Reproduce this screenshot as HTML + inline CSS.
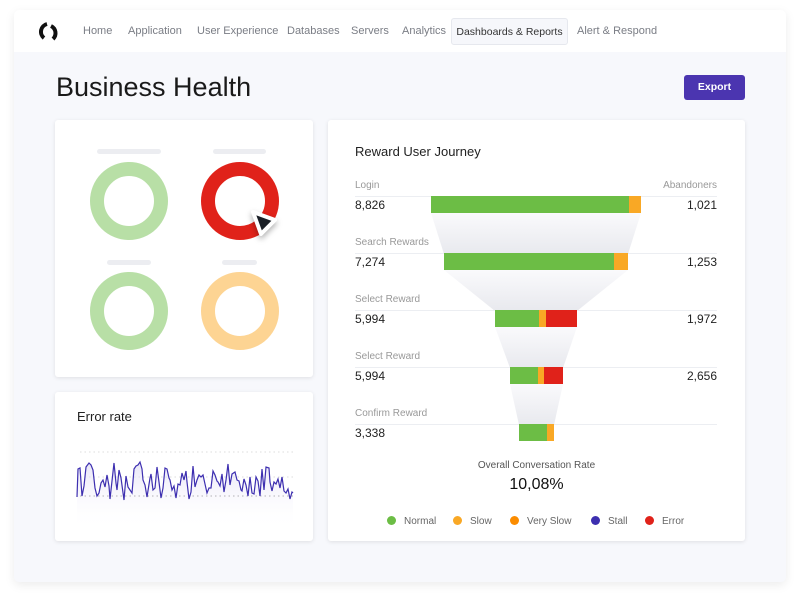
<!DOCTYPE html>
<html><head><meta charset="utf-8"><style>
*{margin:0;padding:0;box-sizing:border-box}
body{width:800px;height:600px;background:#fff;font-family:"Liberation Sans",sans-serif;position:relative;overflow:hidden;color:#222}
.frame{position:absolute;left:14px;top:10px;width:772px;height:572px;background:#f7f8fc;border-radius:5px;box-shadow:0 3px 10px rgba(0,0,0,.08)}
.nav{position:absolute;left:14px;top:10px;width:772px;height:42px;background:#fff;border-radius:5px 5px 0 0}
.nav span{position:absolute;top:15px;font-size:11px;color:#7a7d85}
.nav .act{top:8px;height:27px;width:117px;padding:7px 0;text-align:center;font-size:10.5px;background:#f6f7fb;border:1px solid #e6e8ee;border-radius:3px;color:#333}
h1{position:absolute;left:56px;top:72px;font-size:27px;font-weight:normal;color:#1a1a1a}
.btn{position:absolute;left:684px;top:75px;width:61px;height:25px;background:#4b35b0;border-radius:3px;color:#fff;font-size:10.5px;font-weight:bold;text-align:center;line-height:25px}
.card{position:absolute;background:#fff;border-radius:3px;box-shadow:0 1px 4px rgba(0,0,0,.1)}
.t{position:absolute;font-size:10px;color:#999}
.n{position:absolute;font-size:12px;color:#222}
.r{right:83px}
.ln{position:absolute;left:355px;width:362px;height:1px;background:#eceef2}
.leg{position:absolute;top:516px;font-size:10px;color:#666}
.leg i{display:inline-block;width:9px;height:9px;border-radius:50%;margin-right:8px;vertical-align:-1px}
</style></head><body>
<div class="frame"></div>
<div class="nav">
<svg style="position:absolute;left:25px;top:12px" width="20" height="20" viewBox="0 0 20 20"><path d="M8 2 A8 8 0 0 0 5 16" stroke="#111" stroke-width="4" fill="none"/><path d="M12 4 A8 8 0 0 1 14 17" stroke="#111" stroke-width="4" fill="none"/></svg>
<span style="left:69px">Home</span><span style="left:114px">Application</span><span style="left:183px">User Experience</span><span style="left:273px">Databases</span><span style="left:337px">Servers</span><span style="left:388px">Analytics</span><span class="act" style="left:437px">Dashboards &amp; Reports</span><span style="left:563px">Alert &amp; Respond</span>
</div>
<h1>Business Health</h1>
<div class="btn">Export</div>

<div class="card" style="left:55px;top:120px;width:258px;height:257px"></div>
<svg style="position:absolute;left:0;top:0" width="800" height="600">
<rect x="97" y="149" width="64" height="5" rx="2.5" fill="#ecedf1"/>
<rect x="213" y="149" width="53" height="5" rx="2.5" fill="#ecedf1"/>
<rect x="107" y="260" width="44" height="5" rx="2.5" fill="#ecedf1"/>
<rect x="222" y="260" width="35" height="5" rx="2.5" fill="#ecedf1"/>
<circle cx="129" cy="201" r="32" fill="none" stroke="#b8dfa6" stroke-width="14"/>
<circle cx="240" cy="201" r="32" fill="none" stroke="#e0221a" stroke-width="14"/>
<circle cx="129" cy="311" r="32" fill="none" stroke="#b8dfa6" stroke-width="14"/>
<circle cx="240" cy="311" r="32" fill="none" stroke="#fdd493" stroke-width="14"/>
<path d="M253 212 L275 220 L261 234 Z" fill="#1a1f26" stroke="#fff" stroke-width="4" stroke-linejoin="round" style="filter:drop-shadow(0 3px 3px rgba(0,0,0,.3))"/>
</svg>

<div class="card" style="left:55px;top:392px;width:258px;height:149px"></div>
<div style="position:absolute;left:77px;top:409px;font-size:13px;color:#222">Error rate</div>
<svg style="position:absolute;left:0;top:0" width="800" height="600">
<defs><linearGradient id="g" x1="0" y1="0" x2="0" y2="1"><stop offset="0" stop-color="#d8d4f2"/><stop offset="1" stop-color="#fff" stop-opacity="0"/></linearGradient></defs>
<line x1="80" y1="452" x2="293" y2="452" stroke="#ddd" stroke-dasharray="1.5 3"/>
<line x1="80" y1="477" x2="293" y2="477" stroke="#ddd" stroke-dasharray="1.5 3"/>
<line x1="80" y1="496" x2="293" y2="496" stroke="#999" stroke-dasharray="1.5 3"/>
<path d="M77 497 L78 469 L80 468 L82 496 L84 486 L86 467 L89 463 L91 465 L93 470 L95 488 L97 496 L99 493 L101 483 L103 480 L105 487 L107 475 L109 486 L110 499 L112 481 L114 463 L116 483 L117 490 L119 470 L121 478 L124 500 L126 476 L128 487 L130 490 L132 493 L134 469 L136 466 L138 465 L140 462 L142 469 L143 480 L145 485 L147 497 L150 478 L151 474 L153 490 L155 488 L157 467 L159 482 L161 498 L163 488 L165 468 L167 469 L169 478 L170 480 L172 490 L174 486 L176 498 L178 484 L180 485 L182 473 L184 480 L186 471 L187 482 L189 499 L191 492 L193 466 L195 487 L197 480 L199 475 L201 477 L203 475 L205 484 L207 493 L209 488 L211 488 L213 471 L215 475 L217 481 L218 482 L220 486 L222 474 L224 492 L226 480 L228 464 L230 485 L232 474 L235 472 L237 480 L239 481 L241 490 L242 491 L244 479 L246 485 L248 496 L250 477 L252 493 L254 494 L256 477 L258 481 L260 496 L262 469 L264 490 L266 467 L269 468 L270 482 L272 491 L274 482 L276 484 L278 479 L280 488 L282 477 L284 491 L286 493 L288 489 L290 499 L292 492 L293 493 L293 530 L77 530 Z" fill="url(#g)" opacity=".6"/>
<polyline fill="none" stroke="#3d2fb0" stroke-width="1.2" points="77,497 78,469 80,468 82,496 84,486 86,467 89,463 91,465 93,470 95,488 97,496 99,493 101,483 103,480 105,487 107,475 109,486 110,499 112,481 114,463 116,483 117,490 119,470 121,478 124,500 126,476 128,487 130,490 132,493 134,469 136,466 138,465 140,462 142,469 143,480 145,485 147,497 150,478 151,474 153,490 155,488 157,467 159,482 161,498 163,488 165,468 167,469 169,478 170,480 172,490 174,486 176,498 178,484 180,485 182,473 184,480 186,471 187,482 189,499 191,492 193,466 195,487 197,480 199,475 201,477 203,475 205,484 207,493 209,488 211,488 213,471 215,475 217,481 218,482 220,486 222,474 224,492 226,480 228,464 230,485 232,474 235,472 237,480 239,481 241,490 242,491 244,479 246,485 248,496 250,477 252,493 254,494 256,477 258,481 260,496 262,469 264,490 266,467 269,468 270,482 272,491 274,482 276,484 278,479 280,488 282,477 284,491 286,493 288,489 290,499 292,492 293,493"/>
</svg>

<div class="card" style="left:328px;top:120px;width:417px;height:421px"></div>
<div style="position:absolute;left:355px;top:144px;font-size:13px;color:#222">Reward User Journey</div>
<svg style="position:absolute;left:0;top:0" width="800" height="600">
<defs><linearGradient id="f" x1="0" y1="0" x2="0" y2="1"><stop offset="0" stop-color="#fafafc"/><stop offset="1" stop-color="#e8e9ee"/></linearGradient></defs>
<path d="M431 213 L641 213 L628 254 L444 254 Z" fill="url(#f)"/>
<path d="M444 270 L628 270 L577 311 L495 311 Z" fill="url(#f)"/>
<path d="M495 327 L577 327 L563 368 L510 368 Z" fill="url(#f)"/>
<path d="M510 384 L563 384 L554 425 L519 425 Z" fill="url(#f)"/>
</svg>
<div class="ln" style="top:196px"></div><div class="ln" style="top:253px"></div><div class="ln" style="top:310px"></div><div class="ln" style="top:367px"></div><div class="ln" style="top:424px"></div>
<svg style="position:absolute;left:0;top:0" width="800" height="600">
<rect x="431" y="196" width="198" height="17" fill="#6cbd45"/><rect x="629" y="196" width="12" height="17" fill="#f9a825"/>
<rect x="444" y="253" width="170" height="17" fill="#6cbd45"/><rect x="614" y="253" width="14" height="17" fill="#f9a825"/>
<rect x="495" y="310" width="44" height="17" fill="#6cbd45"/><rect x="539" y="310" width="7" height="17" fill="#f9a825"/><rect x="546" y="310" width="31" height="17" fill="#e0221a"/>
<rect x="510" y="367" width="28" height="17" fill="#6cbd45"/><rect x="538" y="367" width="6" height="17" fill="#f9a825"/><rect x="544" y="367" width="19" height="17" fill="#e0221a"/>
<rect x="519" y="424" width="28" height="17" fill="#6cbd45"/><rect x="547" y="424" width="7" height="17" fill="#f9a825"/>
</svg>
<div class="t" style="left:355px;top:180px">Login</div><div class="t r" style="top:180px">Abandoners</div>
<div class="n" style="left:355px;top:198px">8,826</div><div class="n r" style="top:198px">1,021</div>
<div class="t" style="left:355px;top:237px">Search Rewards</div>
<div class="n" style="left:355px;top:255px">7,274</div><div class="n r" style="top:255px">1,253</div>
<div class="t" style="left:355px;top:294px">Select Reward</div>
<div class="n" style="left:355px;top:312px">5,994</div><div class="n r" style="top:312px">1,972</div>
<div class="t" style="left:355px;top:351px">Select Reward</div>
<div class="n" style="left:355px;top:369px">5,994</div><div class="n r" style="top:369px">2,656</div>
<div class="t" style="left:355px;top:408px">Confirm Reward</div>
<div class="n" style="left:355px;top:426px">3,338</div>
<div style="position:absolute;left:328px;width:417px;top:460px;text-align:center;font-size:10px;color:#555">Overall Conversation Rate</div>
<div style="position:absolute;left:328px;width:417px;top:476px;text-align:center;font-size:16px;color:#111">10,08%</div>
<div class="leg" style="left:387px"><i style="background:#6cbd45"></i>Normal</div>
<div class="leg" style="left:453px"><i style="background:#f9a825"></i>Slow</div>
<div class="leg" style="left:510px"><i style="background:#fb8c00"></i>Very Slow</div>
<div class="leg" style="left:591px"><i style="background:#3d2fb0"></i>Stall</div>
<div class="leg" style="left:645px"><i style="background:#e0221a"></i>Error</div>
</body></html>
